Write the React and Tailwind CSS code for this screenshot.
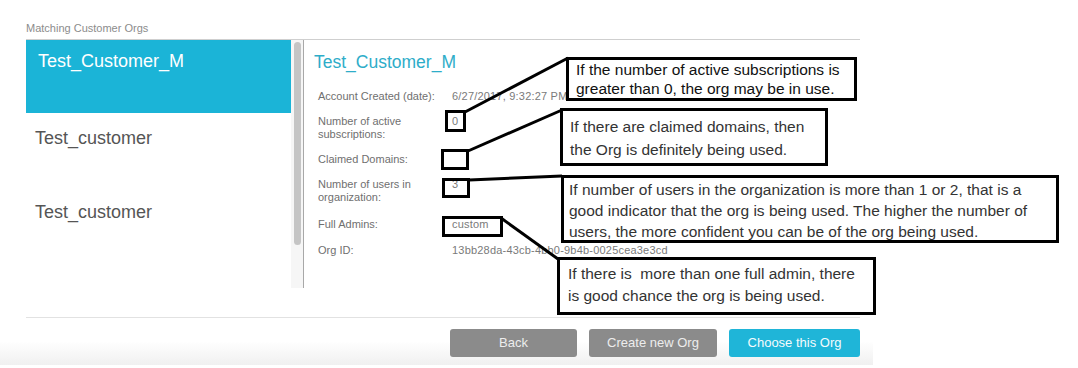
import React from "react";

const rows = [
  { label: ["Account Created (date):"], value: "6/27/2017, 9:32:27 PM", mt: "mt-[17px]" },
  { label: ["Number of active", "subscriptions:"], value: "0", mt: "mt-[12px]" },
  { label: ["Claimed Domains:"], value: "", mt: "mt-[12px]" },
  { label: ["Number of users in", "organization:"], value: "3", mt: "mt-[12px]" },
  { label: ["Full Admins:"], value: "custom", mt: "mt-[14px]" },
  { label: ["Org ID:"], value: "13bb28da-43cb-4bb0-9b4b-0025cea3e3cd", mt: "mt-[13px]" },
];

export default function App() {
  return (
    <div
      className="relative w-[1078px] h-[368px] bg-white overflow-hidden"
      style={{ fontFamily: '"Liberation Sans", Arial, sans-serif' }}
    >
      {/* dialog */}
      <div className="w-[873px] h-[365px] flex flex-col">
        <div className="pl-[26px] pr-[13px]">
          <div className="pt-[21px] h-[39px] text-[11px] leading-[14px] text-[#8c8c8c]">
            Matching Customer Orgs
          </div>
          <div className="border-t border-[#cfcfcf] flex h-[249px]">
            {/* list */}
            <div className="w-[265px] flex flex-col">
              <div className="h-[73px] bg-[#1bb4d7] pl-[12px] pt-[9px] text-[18px] leading-[24px] text-white">
                Test_Customer_M
              </div>
              <div className="h-[74px] pl-[9px] pt-[13px] text-[18px] leading-[24px] text-[#555]">
                Test_customer
              </div>
              <div className="h-[74px] pl-[9px] pt-[13px] text-[18px] leading-[24px] text-[#555]">
                Test_customer
              </div>
            </div>
            {/* scrollbar */}
            <div className="w-[13px] bg-[#f6f6f6] border-r border-[#a8a8a8] pt-[2px] pl-[3px]">
              <div className="w-[7px] h-[203px] rounded-full bg-[#c5c5c5]" />
            </div>
            {/* details */}
            <div className="flex-1 pl-[10px] pt-[11px]">
              <div className="text-[17.5px] leading-[22px] text-[#2eadc9]">Test_Customer_M</div>
              <div className="pl-[4px] flex flex-col">
                {rows.map((r, i) => (
                  <div key={i} className={`flex ${r.mt}`}>
                    <div className="w-[134px] text-[11px] leading-[13px] text-[#6f6f6f]">
                      {r.label.map((l, j) => (
                        <div key={j}>{l}</div>
                      ))}
                    </div>
                    <div className="text-[11px] leading-[13px] text-[#7a7a7a] whitespace-nowrap tracking-[0.2px]">
                      {r.value}
                    </div>
                  </div>
                ))}
              </div>
            </div>
          </div>
        </div>
        {/* footer */}
        <div className="mt-[29px] flex-1 bg-gradient-to-b from-white via-white to-[#f0f0f0]">
          <div className="ml-[26px] mr-[13px] border-t border-[#e2e2e2] pt-[11px] flex justify-end gap-[12px]">
            <button className="w-[127px] h-[28px] rounded-[3px] bg-[#8b8b8b] text-[13px] text-[#ededed]">
              Back
            </button>
            <button className="w-[128px] h-[28px] rounded-[3px] bg-[#8b8b8b] text-[13px] text-[#ededed]">
              Create new Org
            </button>
            <button className="w-[131px] h-[28px] rounded-[3px] bg-[#1fb5d8] text-[13px] text-[#f5fbfd]">
              Choose this Org
            </button>
          </div>
        </div>
      </div>

      {/* annotation connectors and highlight boxes */}
      <svg className="absolute left-0 top-0" width="1078" height="368" viewBox="0 0 1078 368">
        <g stroke="#000" strokeWidth="3" fill="none">
          <rect x="446.5" y="111.5" width="18" height="19" />
          <rect x="442.5" y="150.5" width="25" height="18" />
          <rect x="443.5" y="179.5" width="25" height="17" />
          <rect x="443.5" y="217.5" width="58" height="18" />
          <line x1="465" y1="112" x2="568" y2="58" />
          <line x1="468" y1="151" x2="562" y2="110" />
          <line x1="469" y1="180" x2="562" y2="176" />
          <line x1="501" y1="218" x2="558" y2="259" />
        </g>
      </svg>

      {/* callouts */}
      <div className="absolute left-[566px] top-[57px] w-[291px] h-[44px] border-[3px] border-black bg-white pl-[7px] text-[15.5px] leading-[19px] text-[#111] whitespace-nowrap">
        <div>If the number of active subscriptions is</div>
        <div>greater than 0, the org may be in use.</div>
      </div>
      <div className="absolute left-[560px] top-[108px] w-[268px] h-[58px] border-[3px] border-black bg-white pl-[7px] pt-[4px] text-[15.5px] leading-[23px] text-[#333] whitespace-nowrap">
        <div>If there are claimed domains, then</div>
        <div>the Org is definitely being used.</div>
      </div>
      <div className="absolute left-[561px] top-[175px] w-[498px] h-[68px] border-[3px] border-black bg-white pl-[5px] pt-[1px] text-[15.5px] leading-[21px] text-[#333] whitespace-nowrap">
        <div>If number of users in the organization is more than 1 or 2, that is a</div>
        <div>good indicator that the org is being used. The higher the number of</div>
        <div>users, the more confident you can be of the org being used.</div>
      </div>
      <div className="absolute left-[557px] top-[257px] w-[319px] h-[58px] border-[3px] border-black bg-white pl-[8px] pt-[3px] text-[15.5px] leading-[22px] text-[#333] whitespace-pre">
        <div>If there is  more than one full admin, there</div>
        <div>is good chance the org is being used.</div>
      </div>
    </div>
  );
}
